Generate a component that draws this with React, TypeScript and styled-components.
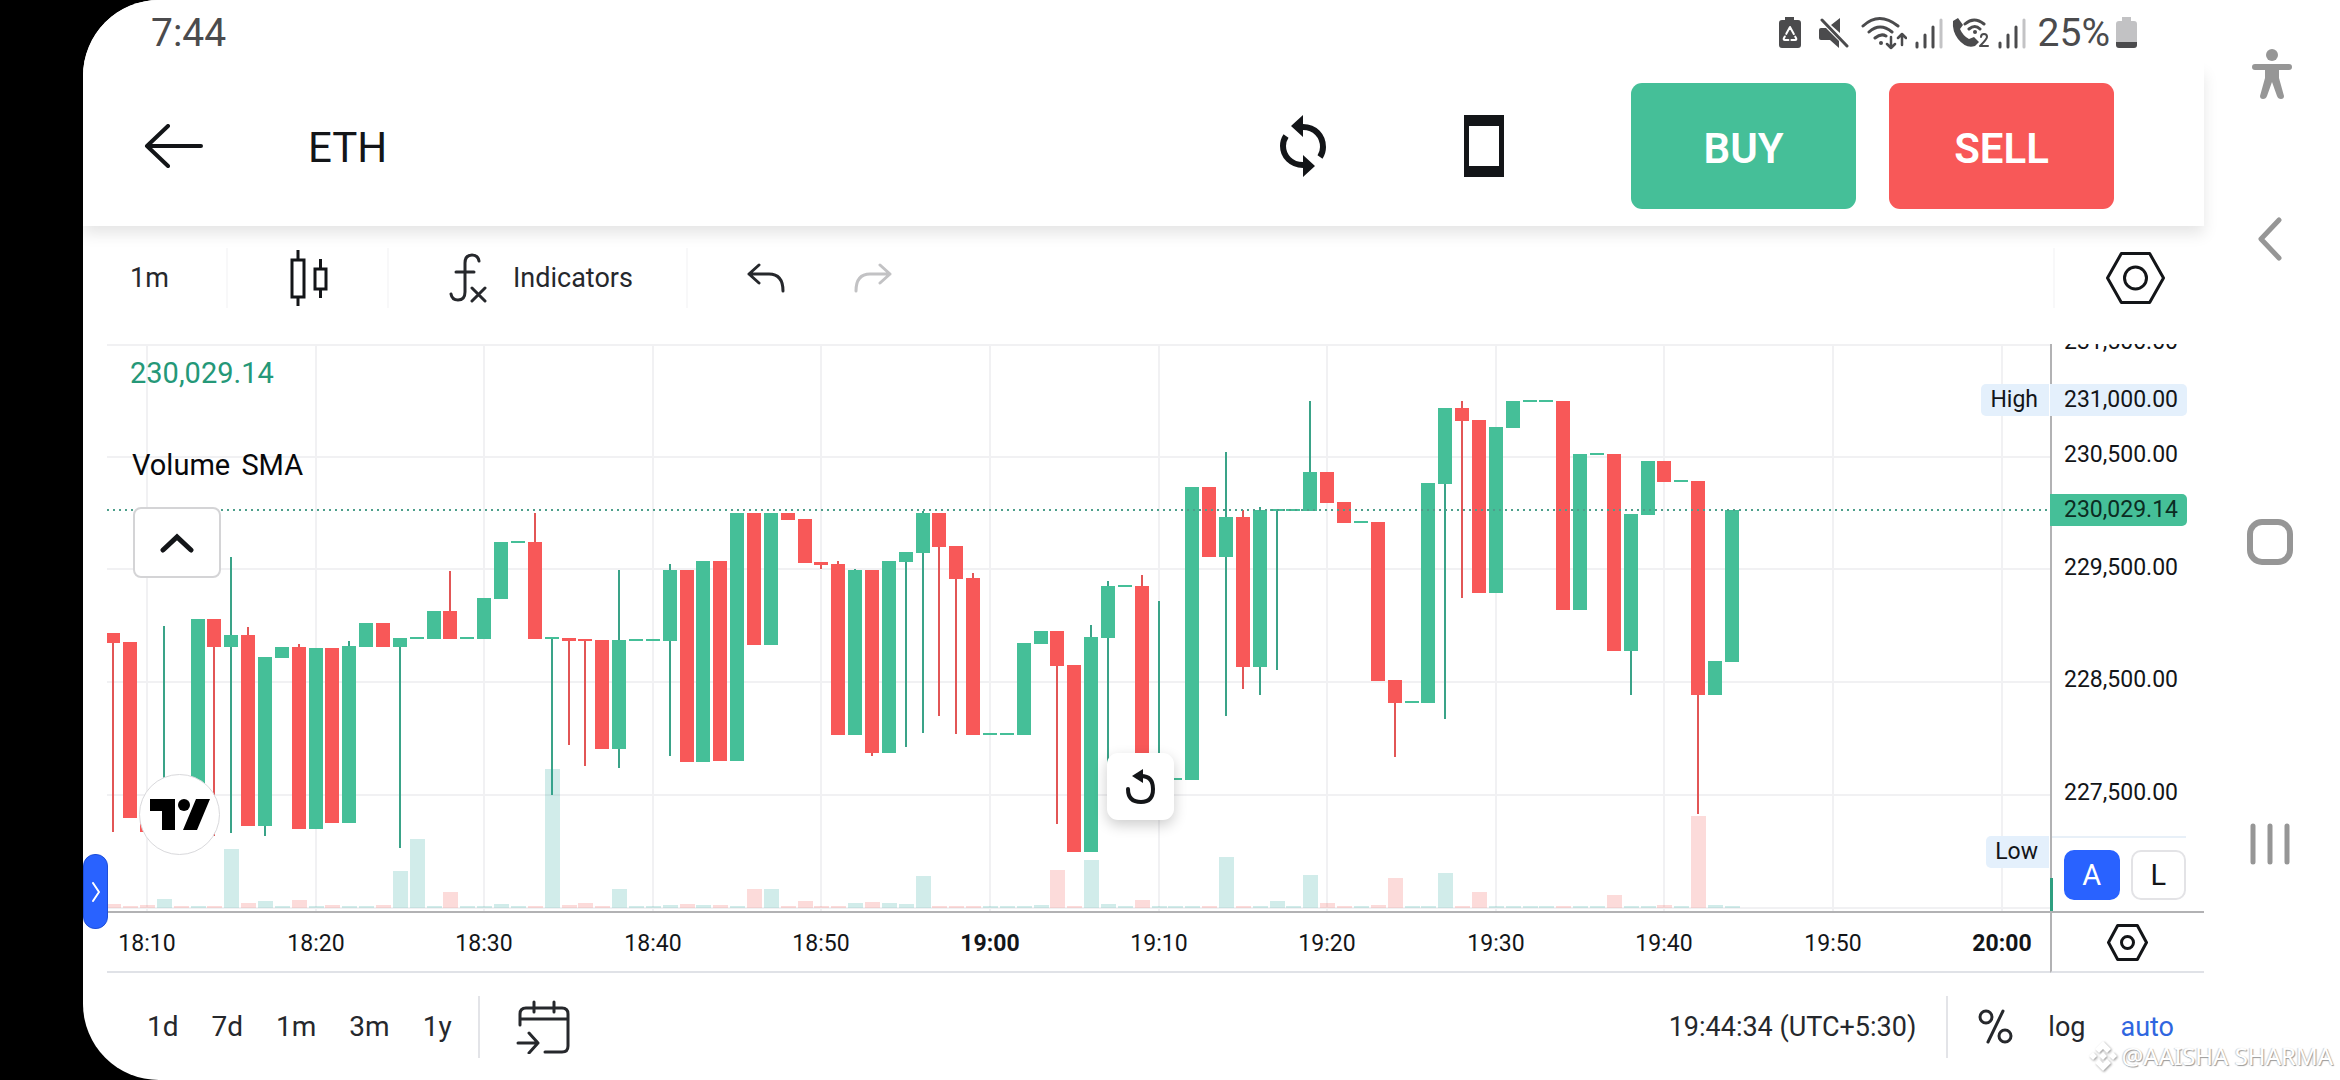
import React from 'react';
import styled, { createGlobalStyle } from 'styled-components';

const green = '#45bf98';
const red = '#f85858';
const greenWick = '#3aa388';
const redWick = '#e25656';
const blue = '#2962ff';
const ink = '#131518';
const grid = '#f1f1f3';
const axisLine = '#b2b2b4';

const GlobalStyle = createGlobalStyle`
  *, *::before, *::after { box-sizing: border-box; }
  body {
    margin: 0;
    background: #000;
    color: ${ink};
    font-family: Roboto, "Liberation Sans", sans-serif;
  }
  button {
    margin: 0;
    padding: 0;
    border: 0;
    background: none;
    color: inherit;
    font: inherit;
    cursor: pointer;
  }
  svg { display: block; flex: none; }
`;

/* ---------- shell ---------- */

const Device = styled.div`
  min-height: 100vh;
  padding-left: 83px;
  display: flex;
  background: #000;
`;

const Screen = styled.div`
  position: relative;
  flex: 1;
  min-width: 0;
  display: flex;
  overflow: hidden;
  background: #fff;
  border-radius: 76px 0 0 76px;
`;

const Main = styled.main`
  flex: 1;
  min-width: 0;
  display: flex;
  flex-direction: column;
`;

const NavBar = styled.nav`
  flex: none;
  width: 136px;
  display: flex;
  flex-direction: column;
  color: #969696;
`;

const NavGroup = styled.div`
  flex: 1;
  margin-bottom: 145px;
  padding-right: 4px;
  display: flex;
  flex-direction: column;
  justify-content: space-between;
`;

const NavButton = styled.button<{ $height: number }>`
  height: ${(p) => p.$height}px;
  display: flex;
  align-items: center;
  justify-content: center;
`;

/* ---------- status bar and header ---------- */

const StatusBar = styled.div`
  position: relative;
  z-index: 2;
  height: 66px;
  padding: 0 66px 0 68px;
  display: flex;
  align-items: center;
  justify-content: space-between;
  background: #fff;
  font-size: 39px;
  line-height: 44px;
  color: #4b4b4d;
`;

const StatusIcons = styled.div`
  display: flex;
  align-items: center;
  gap: 8px;
`;

const Battery = styled.div`
  display: flex;
  align-items: center;
  gap: 6px;
  margin-left: 4px;
`;

const Header = styled.header`
  position: relative;
  z-index: 1;
  height: 160px;
  padding: 0 90px 0 61px;
  display: flex;
  align-items: center;
  background: #fff;
  box-shadow: 0 8px 14px rgba(0, 0, 0, 0.1);
`;

const Symbol = styled.h1`
  flex: 1;
  margin: 0 0 0 104px;
  padding-top: 4px;
  font-size: 42px;
  line-height: 48px;
  font-weight: 400;
`;

const HeaderIcons = styled.div`
  display: flex;
  align-items: center;
  gap: 138px;
  margin-right: 127px;
`;

const Trade = styled.div`
  display: flex;
  gap: 33px;
`;

const TradeButton = styled.button<{ $tone: string }>`
  width: 225px;
  height: 126px;
  padding-top: 4px;
  border-radius: 11px;
  background: ${(p) => p.$tone};
  color: #fff;
  font-size: 42px;
  font-weight: 600;
`;

/* ---------- chart toolbar ---------- */

const Toolbar = styled.div`
  height: 118px;
  padding-bottom: 14px;
  display: flex;
  align-items: center;
  font-size: 27px;
  line-height: 32px;
  color: #26282c;
`;

const ToolSegment = styled.div<{ $width?: number; $pad?: number; $gap?: number; $rule?: boolean }>`
  height: 60px;
  width: ${(p) => (p.$width ? `${p.$width}px` : 'auto')};
  padding-left: ${(p) => p.$pad ?? 0}px;
  display: flex;
  align-items: center;
  gap: ${(p) => p.$gap ?? 0}px;
  border-right: ${(p) => (p.$rule ? '2px solid #f8f8f9' : '0')};
`;

const ToolEnd = styled(ToolSegment)`
  margin-left: auto;
  border-left: 2px solid #f8f8f9;
`;

const ToolButton = styled.button`
  display: flex;
  align-items: center;
  gap: 26px;
`;

/* ---------- chart ---------- */

const ChartGrid = styled.section`
  flex: 1;
  min-height: 400px;
  margin-left: 24px;
  display: grid;
  grid-template-columns: minmax(0, 1fr) 154px;
  grid-template-rows: minmax(0, 1fr) 60px;
`;

const Plot = styled.div`
  position: relative;
  border-bottom: 2px solid ${axisLine};

  > svg {
    position: absolute;
    inset: 0;
    width: 100%;
    height: 100%;
  }
`;

const Legend = styled.div`
  position: relative;
  padding: 11px 0 0 23px;
  display: flex;
  flex-direction: column;
  align-items: flex-start;
  font-size: 29px;
  line-height: 36px;
`;

const LastPrice = styled.span`
  color: #259878;
`;

const Study = styled.span`
  margin: 56px 0 24px 2px;
  color: #08090b;
  word-spacing: 4px;
`;

const CollapseButton = styled.button`
  width: 88px;
  height: 71px;
  margin-left: 3px;
  display: flex;
  align-items: center;
  justify-content: center;
  border: 2px solid #d4d4d6;
  border-radius: 8px;
  background: #fff;
`;

const Brand = styled.a`
  position: absolute;
  left: 32px;
  bottom: 56px;
  width: 81px;
  height: 81px;
  display: flex;
  align-items: center;
  justify-content: center;
  border: 1px solid #d9d9dc;
  border-radius: 50%;
  background: #fff;
  color: #000;
`;

const DrawerTab = styled.button`
  position: absolute;
  left: -24px;
  bottom: -18px;
  width: 25px;
  height: 75px;
  display: flex;
  align-items: center;
  justify-content: center;
  border: 1px solid #1f4fd8;
  border-radius: 12px;
  background: ${blue};
  color: #fff;
`;

const ResetButton = styled.button`
  position: absolute;
  left: 1000px;
  bottom: 91px;
  width: 67px;
  height: 67px;
  display: flex;
  align-items: center;
  justify-content: center;
  border-radius: 11px;
  background: #fff;
  box-shadow: 0 5px 14px rgba(0, 0, 0, 0.2);
`;

const tagText = `
  font-size: 23px;
  line-height: 32px;
  height: 32px;
  white-space: nowrap;
`;

const EdgeTag = styled.span`
  ${tagText}
  position: absolute;
  right: 1px;
  transform: translateY(-50%);
  padding: 0 11px 0 9px;
  border-radius: 5px 0 0 5px;
  background: #e4f0fc;
`;

const PriceAxis = styled.div`
  position: relative;
  overflow: hidden;
  border-bottom: 2px solid ${axisLine};
  background: linear-gradient(${axisLine}, ${axisLine}) 0 0 / 2px 100% no-repeat;
`;

const PriceLabel = styled.span<{ $fill?: string; $color?: string }>`
  ${tagText}
  position: absolute;
  left: 0;
  width: 137px;
  transform: translateY(-50%);
  padding-left: 14px;
  border-radius: 0 5px 5px 0;
  background: ${(p) => p.$fill ?? 'transparent'};
  color: ${(p) => p.$color ?? ink};
`;

const VolumeMark = styled.i`
  position: absolute;
  left: 0;
  bottom: 0;
  width: 3px;
  height: 33px;
  background: #2f9f80;
`;

const ScaleSwitch = styled.div`
  position: absolute;
  left: 2px;
  right: 18px;
  bottom: 0;
  height: 75px;
  padding: 12px 0 0 12px;
  display: flex;
  align-items: flex-start;
  gap: 11px;
  border-top: 2px solid #e8f0f8;
`;

const ScaleButton = styled.button<{ $on?: boolean }>`
  width: 56px;
  height: 50px;
  border-radius: 10px;
  border: 2px solid ${(p) => (p.$on ? blue : '#e3e3e6')};
  background: ${(p) => (p.$on ? blue : '#fff')};
  color: ${(p) => (p.$on ? '#fff' : ink)};
  font-size: 29px;
  line-height: 40px;
`;

const TimeAxis = styled.div`
  position: relative;
  border-bottom: 2px solid #e0e2e7;
`;

const TimeLabel = styled.span<{ $strong?: boolean }>`
  position: absolute;
  top: 15px;
  transform: translateX(-50%);
  font-size: 23px;
  line-height: 32px;
  font-weight: ${(p) => (p.$strong ? 700 : 400)};
`;

const AxisCorner = styled.div`
  padding-right: 2px;
  display: flex;
  align-items: center;
  justify-content: center;
  border-left: 2px solid ${axisLine};
  border-bottom: 2px solid #e0e2e7;
`;

/* ---------- footer ---------- */

const Footer = styled.footer`
  height: 107px;
  padding: 0 30px 0 64px;
  display: flex;
  align-items: center;
  font-size: 28px;
  line-height: 36px;
  color: #26282c;
`;

const Ranges = styled.div`
  display: flex;
  gap: 33px;
`;

const Rule = styled.span<{ $lead: number }>`
  width: 2px;
  height: 62px;
  margin: 0 30px 0 ${(p) => p.$lead}px;
  background: #e3e4e8;
`;

const GoTo = styled.button`
  margin-left: 6px;
`;

const Clock = styled.button`
  margin-left: auto;
  font-size: 27px;
`;

const ScaleOptions = styled.div`
  display: flex;
  align-items: center;
  gap: 35px;
  font-size: 27px;
`;

const Option = styled.button<{ $on?: boolean }>`
  color: ${(p) => (p.$on ? '#2f66e0' : 'inherit')};
`;

const Watermark = styled.div`
  position: absolute;
  right: 7px;
  bottom: 8px;
  display: flex;
  align-items: center;
  gap: 5px;
  color: #fff;
  font-family: "Noto Sans", sans-serif;
  font-size: 24px;
  line-height: 32px;
  text-shadow: 1px 1px 1px #9a9a9a, -1px 0 1px #d0d0d0;

  svg { filter: drop-shadow(1px 1px 1px #9a9a9a); }
`;

/* ---------- data, in plot units ---------- */

const LEFT = 107;
const TOP = 344;
const WIDTH = 1943;
const HEIGHT = 567;
const FLOOR = 908;
const centre = (minute: number) => Math.round(147 + 16.86 * minute);
const fromLeft = (x: number) => `${((x - LEFT) / WIDTH) * 100}%`;
const fromTop = (y: number) => `${((y - TOP) / HEIGHT) * 100}%`;

type Side = 'g' | 'r';
/* side, body top, body bottom, high, low; one entry a minute from 18:08 */
type Candle = [Side, number, number, number?, number?];

const candles: Candle[] = [
  ['r', 633, 643, 633, 832], ['r', 642, 818], ['r', 815, 832], ['g', 798, 800, 626, 800],
  ['r', 798, 800], ['g', 619, 800], ['r', 619, 647, 619, 836], ['g', 635, 647, 557, 833],
  ['r', 635, 826, 627, 826], ['g', 657, 826, 657, 836], ['g', 647, 658], ['r', 647, 829, 644, 829],
  ['g', 648, 829], ['r', 648, 823], ['g', 646, 823, 641, 823], ['g', 623, 647], ['r', 623, 647],
  ['g', 638, 647, 638, 848], ['g', 637, 639], ['g', 611, 639], ['r', 611, 639, 571, 639],
  ['g', 637, 639], ['g', 598, 639], ['g', 542, 599], ['g', 541, 543], ['r', 542, 639, 513, 639],
  ['g', 637, 639, 637, 795], ['r', 638, 641, 638, 745], ['r', 639, 641, 639, 766], ['r', 640, 749],
  ['g', 640, 749, 570, 768], ['g', 639, 641], ['g', 639, 641], ['g', 570, 641, 564, 756],
  ['r', 570, 762], ['g', 561, 762], ['r', 561, 761], ['g', 513, 761], ['r', 513, 645],
  ['g', 513, 645], ['r', 513, 520], ['r', 519, 563], ['r', 562, 565, 562, 569],
  ['r', 564, 735, 561, 735], ['g', 570, 735, 569, 735], ['r', 570, 753, 570, 756], ['g', 561, 753],
  ['g', 552, 562, 552, 747], ['g', 513, 553, 511, 733], ['r', 513, 547, 513, 716],
  ['r', 546, 579, 546, 734], ['r', 578, 735, 573, 735], ['g', 733, 735], ['g', 733, 735],
  ['g', 643, 735], ['g', 631, 644], ['r', 631, 666, 631, 824], ['r', 665, 852],
  ['g', 637, 852, 625, 852], ['g', 586, 638, 581, 780], ['g', 585, 587], ['r', 586, 770, 575, 770],
  ['g', 778, 780, 601, 780], ['g', 778, 780], ['g', 487, 780], ['r', 487, 557],
  ['g', 517, 557, 452, 716], ['r', 517, 667, 510, 689], ['g', 510, 667, 507, 695],
  ['g', 509, 511, 509, 670], ['g', 509, 511], ['g', 472, 511, 401, 511], ['r', 472, 503],
  ['r', 502, 523], ['g', 521, 523], ['r', 522, 681], ['r', 680, 703, 680, 757], ['g', 701, 703],
  ['g', 483, 703], ['g', 408, 484, 408, 719], ['r', 408, 421, 401, 598], ['r', 420, 593],
  ['g', 427, 593], ['g', 401, 428], ['g', 400, 402], ['g', 400, 402], ['r', 401, 610],
  ['g', 454, 610], ['g', 453, 455], ['r', 454, 651], ['g', 514, 651, 514, 695], ['g', 461, 515],
  ['r', 461, 482], ['g', 480, 482], ['r', 481, 695, 481, 814], ['g', 661, 695], ['g', 510, 662],
];

/* minute → volume height, where it is more than the two-pixel minimum */
const volumes: Record<number, number> = {
  [-2]: 4, 0: 3, 1: 9, 5: 59, 6: 5, 7: 7, 9: 8, 11: 3, 14: 3, 15: 37, 16: 69, 18: 16, 21: 4,
  24: 139, 25: 3, 26: 5, 28: 19, 31: 3, 32: 4, 33: 3, 34: 3, 36: 19, 37: 19, 39: 7, 42: 5, 43: 6,
  44: 5, 45: 4, 46: 32, 53: 3, 54: 38, 56: 48, 57: 4, 59: 8, 64: 51, 67: 7, 69: 33, 70: 5, 73: 3,
  74: 30, 77: 35, 79: 16, 87: 13, 90: 3, 92: 92, 93: 3,
};

const times = [
  '18:10', '18:20', '18:30', '18:40', '18:50', '19:00',
  '19:10', '19:20', '19:30', '19:40', '19:50', '20:00',
];

const prices = [
  { text: '231,500.00', y: 342 },
  { text: '231,000.00', y: 400, fill: '#e4f0fc' },
  { text: '230,500.00', y: 455 },
  { text: '230,029.14', y: 510, fill: green, color: '#0b2c22' },
  { text: '229,500.00', y: 568 },
  { text: '228,500.00', y: 680 },
  { text: '227,500.00', y: 793 },
];

const gridRows = [344, 456, 568, 681, 794, 907];

function CandleChart() {
  return (
    <svg
      viewBox={`${LEFT} ${TOP} ${WIDTH} ${HEIGHT}`}
      preserveAspectRatio="none"
      role="img"
      aria-label="ETH one minute candles"
    >
      {gridRows.map((y) => (
        <rect key={y} x={LEFT} y={y} width={WIDTH} height={2} fill={grid} />
      ))}
      {times.map((t, i) => (
        <rect key={t} x={centre(i * 10) - 1} y={TOP} width={2} height={HEIGHT} fill={grid} />
      ))}
      {candles.map(([side, top, bottom, high, low], i) => {
        const x = centre(i - 2);
        return (
          <g key={i}>
            {high !== undefined && low !== undefined && (
              <rect x={x - 1} y={high} width={2} height={low - high} fill={side === 'g' ? greenWick : redWick} />
            )}
            <rect x={x - 7} y={top} width={14} height={bottom - top} fill={side === 'g' ? green : red} />
          </g>
        );
      })}
      {candles.map(([side], i) => {
        const h = volumes[i - 2] ?? 2;
        return (
          <rect
            key={i}
            x={centre(i - 2) - 7}
            y={FLOOR - h}
            width={15}
            height={h}
            fill={side === 'g' ? '#26a69a' : '#ef5350'}
            opacity={0.21}
          />
        );
      })}
      <line
        x1={LEFT}
        x2={LEFT + WIDTH}
        y1={510}
        y2={510}
        stroke="#4d9f8b"
        strokeWidth={2}
        strokeDasharray="2 4"
      />
    </svg>
  );
}

/* ---------- icons ---------- */

const line = (w: number) => ({
  fill: 'none',
  stroke: 'currentColor',
  strokeWidth: w,
  strokeLinecap: 'round' as const,
  strokeLinejoin: 'round' as const,
});

const Nut = ({ w, h, r, s }: { w: number; h: number; r: number; s: number }) => (
  <svg width={w} height={h} viewBox={`0 0 ${w} ${h}`} fill="none" stroke={ink} strokeWidth={s}>
    <path d={`M${w * 0.26} ${s / 2}H${w * 0.74}L${w - s / 2} ${h / 2}L${w * 0.74} ${h - s / 2}H${w * 0.26}L${s / 2} ${h / 2}Z`} strokeLinejoin="round" />
    <circle cx={w / 2} cy={h / 2} r={r} />
  </svg>
);

const Signal = () => (
  <svg width="28" height="31" viewBox="0 0 28 31" {...line(3)}>
    <path d="M2 25v4M10 17v12M18 9v20" />
    <path d="M26 2v27" stroke="#c3c3c5" />
  </svg>
);

export default function App() {
  return (
    <>
      <GlobalStyle />
      <Device>
        <Screen>
          <Main>
            <StatusBar>
              <span>7:44</span>
              <StatusIcons>
                <svg width="33" height="32" viewBox="0 0 33 32">
                  <path d="M7 0h9v3h4q3 0 3 3v22q0 3-3 3H4q-3 0-3-3V6q0-3 3-3h3z" fill="currentColor" />
                  <path d="M12 10l6 11q1 2-1 2H7q-2 0-1-2z" {...line(2)} stroke="#fff" strokeDasharray="8 3" />
                </svg>
                <svg width="30" height="32" viewBox="0 0 30 32">
                  <path d="M0 13q0-2 2-2h5L20 24v7l-9-8H2q-2 0-2-2zM21 1v15L12 8z" fill="currentColor" />
                  <path d="M3 3l25 26" {...line(3)} />
                </svg>
                <svg width="50" height="34" viewBox="0 0 50 34" {...line(3)}>
                  <path d="M6 10q16-15 35 0M12 16q11-10 23 0M18 22q6-5 11-2" />
                  <circle cx="24" cy="27" r="2" fill="currentColor" stroke="none" />
                  <path d="M34 21v11M30 28l4 4 4-4M45 29V18M41 22l4-4 4 4" strokeWidth="2.500" />
                </svg>
                <Signal />
                <svg width="39" height="32" viewBox="0 0 39 32">
                  <path d="M2 4l5-3 5 7-3 4q3 7 9 10l5-2 5 5-4 4Q15 32 7 22 1 14 2 4z" fill="currentColor" />
                  <path d="M14 7q9-8 19 0M18 12q6-5 11 0" {...line(3)} />
                  <circle cx="24" cy="15" r="2" fill="currentColor" />
                  <path d="M30 20q0-3 3-3t3 3q0 2-7 9h8" {...line(2)} />
                </svg>
                <Signal />
                <Battery>
                  <span>25%</span>
                  <svg width="22" height="32" viewBox="0 0 22 32">
                    <path d="M6 0h9v4h3q3 0 3 3v18H0V7q0-3 3-3h3z" fill="#c2c2c4" />
                    <path d="M0 25h21v3q0 3-3 3H3q-3 0-3-3z" fill="currentColor" />
                  </svg>
                </Battery>
              </StatusIcons>
            </StatusBar>

            <Header>
              <button aria-label="Back">
                <svg width="60" height="44" viewBox="0 0 60 44" {...line(4)}>
                  <path d="M57 22H3M24 2L3 22l21 20" />
                </svg>
              </button>
              <Symbol>ETH</Symbol>
              <HeaderIcons>
                <button aria-label="Refresh">
                  <svg width="46" height="62" viewBox="0 0 46 62">
                    <path d="M23 12c12 0 20 9 20 20 0 4-1 7-3 10M23 50C11 50 3 41 3 31c0-4 1-7 3-10" fill="none" stroke={ink} strokeWidth="6" />
                    <path d="M23 0v22L11 11zM23 40v22l12-11z" fill={ink} />
                  </svg>
                </button>
                <button aria-label="Portrait view">
                  <svg width="40" height="62" viewBox="0 0 40 62">
                    <path d="M0 0h40v62H0zM5 11v40h30V11z" fill={ink} fillRule="evenodd" />
                  </svg>
                </button>
              </HeaderIcons>
              <Trade>
                <TradeButton $tone={green}>BUY</TradeButton>
                <TradeButton $tone={red}>SELL</TradeButton>
              </Trade>
            </Header>

            <Toolbar>
              <ToolSegment $width={145} $pad={47} $rule>
                <ToolButton>1m</ToolButton>
              </ToolSegment>
              <ToolSegment $width={161} $pad={62} $rule>
                <ToolButton aria-label="Chart type">
                  <svg width="38" height="56" viewBox="0 0 38 56" fill="none" stroke={ink} strokeWidth="3">
                    <path d="M2 10h12v37H2zM8 0v10M8 47v9M25 19h11v20H25zM30.500 9v10M30.500 39v9" />
                  </svg>
                </ToolButton>
              </ToolSegment>
              <ToolSegment $width={299} $pad={60} $rule>
                <ToolButton>
                  <svg width="38" height="50" viewBox="0 0 38 50" {...line(3)}>
                    <path d="M30 8q-1-6-7-6-7 0-7 8v29q0 8-7 8-6 0-7-6M7 19h18" />
                    <path d="M23 35l13 13M36 35L23 48" />
                  </svg>
                  Indicators
                </ToolButton>
              </ToolSegment>
              <ToolSegment $pad={59} $gap={69}>
                <ToolButton aria-label="Undo">
                  <svg width="38" height="30" viewBox="0 0 38 30" {...line(3)}>
                    <path d="M12 2L2 11l10 9M2 11h20q14 0 14 17" />
                  </svg>
                </ToolButton>
                <ToolButton aria-label="Redo" disabled>
                  <svg width="38" height="30" viewBox="0 0 38 30" {...line(3)} stroke="#c2c2c4">
                    <path d="M26 2l10 9-10 9M36 11H16Q2 11 2 28" />
                  </svg>
                </ToolButton>
              </ToolSegment>
              <ToolEnd $width={151} $pad={51}>
                <ToolButton aria-label="Settings">
                  <Nut w={59} h={52} r={11} s={3} />
                </ToolButton>
              </ToolEnd>
            </Toolbar>

            <ChartGrid>
              <Plot>
                <CandleChart />
                <Legend>
                  <LastPrice>230,029.14</LastPrice>
                  <Study>Volume SMA</Study>
                  <CollapseButton aria-label="Collapse legend">
                    <svg width="34" height="20" viewBox="0 0 34 20" {...line(5)}>
                      <path d="M3 17L17 4l14 13" strokeLinejoin="miter" />
                    </svg>
                  </CollapseButton>
                </Legend>
                <EdgeTag style={{ top: fromTop(400) }}>High</EdgeTag>
                <EdgeTag style={{ top: fromTop(852) }}>Low</EdgeTag>
                <Brand href="#" aria-label="TradingView">
                  <svg width="60" height="31" viewBox="0 0 60 31" fill="currentColor">
                    <path d="M0 0h25v31H12V12H0zM46 0h14L47 31H33z" />
                    <circle cx="34" cy="6" r="6" />
                  </svg>
                </Brand>
                <ResetButton aria-label="Reset chart">
                  <svg width="32" height="36" viewBox="0 0 32 36">
                    <path d="M3 20q0 13 13 13 12 0 12-13T16 7" {...line(4)} />
                    <path d="M18 0v14L7 7z" fill={ink} />
                  </svg>
                </ResetButton>
                <DrawerTab aria-label="Open drawing tools">
                  <svg width="8" height="20" viewBox="0 0 8 20" {...line(2)}>
                    <path d="M1 1l6 9-6 9" />
                  </svg>
                </DrawerTab>
              </Plot>
              <PriceAxis>
                {prices.map((p) => (
                  <PriceLabel key={p.text} $fill={p.fill} $color={p.color} style={{ top: fromTop(p.y) }}>
                    {p.text}
                  </PriceLabel>
                ))}
                <ScaleSwitch>
                  <ScaleButton $on>A</ScaleButton>
                  <ScaleButton>L</ScaleButton>
                </ScaleSwitch>
                <VolumeMark />
              </PriceAxis>
              <TimeAxis>
                {times.map((t, i) => (
                  <TimeLabel key={t} $strong={t.endsWith(':00')} style={{ left: fromLeft(centre(i * 10)) }}>
                    {t}
                  </TimeLabel>
                ))}
              </TimeAxis>
              <AxisCorner>
                <button aria-label="Axis settings">
                  <Nut w={41} h={37} r={6} s={3} />
                </button>
              </AxisCorner>
            </ChartGrid>

            <Footer>
              <Ranges>
                {['1d', '7d', '1m', '3m', '1y'].map((r) => (
                  <button key={r}>{r}</button>
                ))}
              </Ranges>
              <Rule $lead={26} />
              <GoTo aria-label="Go to date">
                <svg width="54" height="54" viewBox="0 0 54 54" {...line(3)}>
                  <path d="M4 25V14q0-6 6-6h36q6 0 6 6v32q0 6-6 6H29M4 19h48M18 2v10M38 2v10M2 43h20M13 33l9 10-9 10" />
                </svg>
              </GoTo>
              <Clock>19:44:34 (UTC+5:30)</Clock>
              <Rule $lead={30} />
              <ScaleOptions>
                <Option aria-label="Percent scale">
                  <svg width="35" height="35" viewBox="0 0 35 35" {...line(3)}>
                    <circle cx="8" cy="8" r="6" />
                    <circle cx="27" cy="27" r="6" />
                    <path d="M25 2L10 33" />
                  </svg>
                </Option>
                <Option>log</Option>
                <Option $on>auto</Option>
              </ScaleOptions>
            </Footer>
          </Main>

          <NavBar>
            <NavButton $height={148} aria-label="Accessibility">
              <svg width="40" height="50" viewBox="0 0 40 50" fill="currentColor">
                <circle cx="20" cy="6" r="6" />
                <path d="M3 15h34q3 0 3 3t-3 3H27v8l5 18q0 3-3 3t-4-3l-5-14-5 14q-1 3-4 3t-3-3l5-18v-8H3q-3 0-3-3t3-3z" />
              </svg>
            </NavButton>
            <NavGroup>
              <NavButton $height={182} aria-label="Back">
                <svg width="26" height="44" viewBox="0 0 26 44" {...line(5)}>
                  <path d="M22 3L4 22l18 19" />
                </svg>
              </NavButton>
              <NavButton $height={182} aria-label="Home">
                <svg width="46" height="46" viewBox="0 0 46 46" {...line(6)}>
                  <rect x="3" y="3" width="40" height="40" rx="12" />
                </svg>
              </NavButton>
              <NavButton $height={182} aria-label="Recent apps">
                <svg width="42" height="42" viewBox="0 0 42 42" {...line(5)}>
                  <path d="M4 3v36M21 3v36M38 3v36" />
                </svg>
              </NavButton>
            </NavGroup>
          </NavBar>

          <Watermark>
            <svg width="28" height="30" viewBox="0 0 28 30" fill="#fff">
              <path d="M14 0l8 8-4 4-4-4-4 4-4-4zM14 30l-8-8 4-4 4 4 4-4 4 4zM14 11l4 4-4 4-4-4zM4 11l4 4-4 4-4-4zM24 11l4 4-4 4-4-4z" />
            </svg>
            <span>@AAISHA SHARMA</span>
          </Watermark>
        </Screen>
      </Device>
    </>
  );
}
